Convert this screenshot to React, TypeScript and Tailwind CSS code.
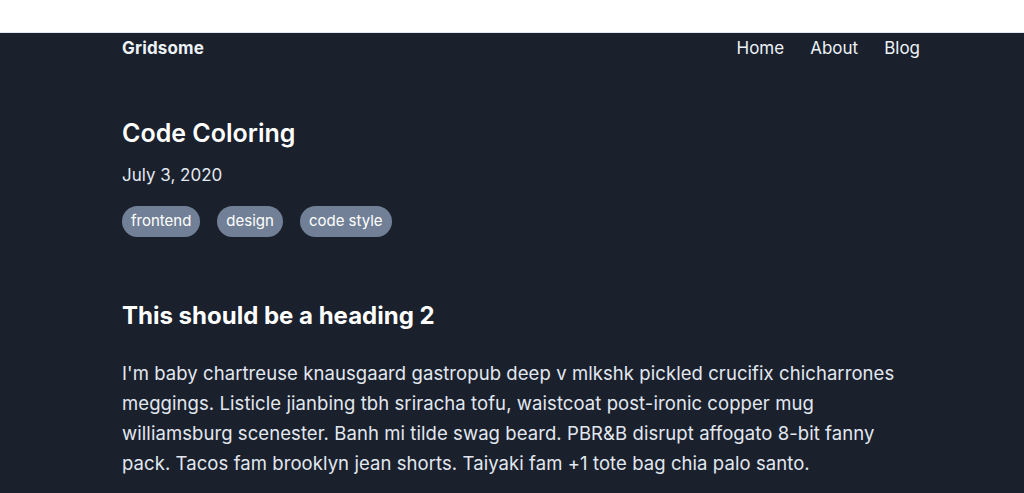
export default function App() {
  const tags = ["frontend", "design", "code style"];
  return (
    <div className="min-h-[493px] bg-[#1a202c] font-['Inter',sans-serif] text-[#f7fafc]">
      <div className="h-[33px] border-b border-[#e2e8f0] bg-white" />
      <div className="ml-[122px] w-[798px]">
        {/* Header */}
        <header className="flex h-[32px] items-center justify-between">
          <a className="text-[17px] font-bold tracking-[0.01em] text-[#edf2f7]">Gridsome</a>
          <nav className="flex gap-[26px] text-[17px] text-[#edf2f7]">
            <a>Home</a>
            <a>About</a>
            <a>Blog</a>
          </nav>
        </header>

        {/* Post header */}
        <h1 className="mt-[52px] text-[25px] font-semibold leading-[32px] text-white">Code Coloring</h1>
        <p className="mt-[14px] text-[17px] leading-[24px] text-[#e2e8f0]">July 3, 2020</p>
        <div className="mt-[19px] flex gap-[17px]">
          {tags.map((tag) => (
            <span
              key={tag}
              className="flex h-[31px] items-center rounded-full bg-[#718096] px-[9px] text-[15px] text-white"
            >
              {tag}
            </span>
          ))}
        </div>

        {/* Body */}
        <h2 className="mt-[63px] text-[24px] font-bold leading-[32px] text-white">This should be a heading 2</h2>
        <p className="mt-[26px] w-[790px] text-[18.5px] leading-[30px] tracking-[0.004em] text-[#e2e8f0]">
          I'm baby chartreuse knausgaard gastropub deep v mlkshk pickled crucifix chicharrones meggings. Listicle
          jianbing tbh sriracha tofu, waistcoat post-ironic copper mug williamsburg scenester. Banh mi tilde swag
          beard. PBR&amp;B disrupt affogato 8-bit fanny pack. Tacos fam brooklyn jean shorts. Taiyaki fam +1 tote
          bag chia palo santo.
        </p>
      </div>
    </div>
  );
}
